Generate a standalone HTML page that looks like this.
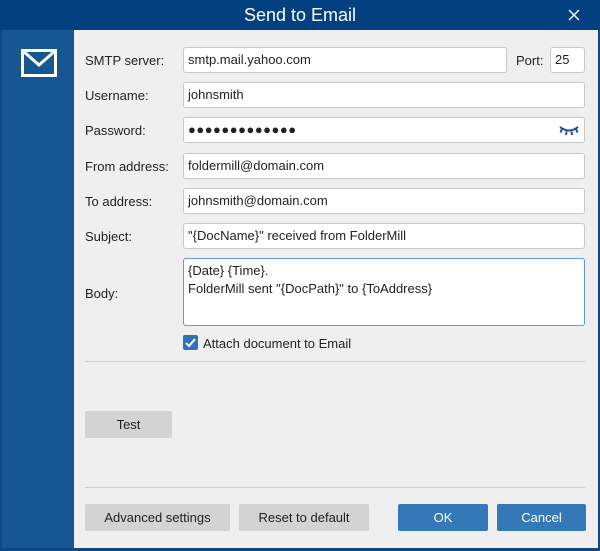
<!DOCTYPE html>
<html><head><style>
*{box-sizing:border-box;margin:0;padding:0}
body{width:600px;height:551px;background:#0e4784;font-family:"Liberation Sans",sans-serif;font-size:13px;color:#222;position:relative;overflow:hidden}
.title{position:absolute;left:0;top:0;width:600px;height:30px;background:#02407f;color:#fff;text-align:center;font-size:18px;line-height:30px}
.side{position:absolute;left:2px;top:30px;width:72px;height:518px;background:#175791}
.main{position:absolute;left:74px;top:30px;width:524px;height:518px;background:#efefef}
.lbl{position:absolute;left:85px}
.in{position:absolute;left:183px;width:402px;height:26px;background:#fff;border:1px solid #c9c9c9;border-radius:3px;padding:0 4px;line-height:24px;white-space:nowrap}
.btn{position:absolute;height:27px;background:#d3d3d3;border-radius:2px;text-align:center;line-height:27px}
.blue{background:#3478b8;color:#fff}
.sep{position:absolute;left:85px;width:500px;height:1px;background:#cfcfcf}
</style></head><body>
<div class="title">Send to Email</div>
<svg style="position:absolute;left:568px;top:9px" width="12" height="12"><path d="M1 1 L11 11 M11 1 L1 11" stroke="#fff" stroke-width="1.4"/></svg>
<div class="side"><svg style="position:absolute;left:19px;top:19px" width="36" height="28" viewBox="0 0 36 28"><rect x="1.5" y="1.5" width="33" height="25" fill="none" stroke="#fff" stroke-width="3"/><path d="M2 2 L18 16 L34 2" fill="none" stroke="#fff" stroke-width="3"/></svg></div>
<div class="main"></div>
<div class="lbl" style="top:53px">SMTP server:</div>
<div class="in" style="top:47px;width:324px">smtp.mail.yahoo.com</div>
<div class="lbl" style="left:516px;top:53px">Port:</div>
<div class="in" style="top:47px;left:550px;width:35px">25</div>
<div class="lbl" style="top:88px">Username:</div>
<div class="in" style="top:82px">johnsmith</div>
<div class="lbl" style="top:123px">Password:</div>
<div class="in" style="top:117px;font-size:13px;letter-spacing:0.5px">●●●●●●●●●●●●●<svg style="position:absolute;right:5px;top:7px" width="20" height="11" viewBox="0 0 20 11"><path d="M1 2 Q10 9 19 2 M3 4 L1.5 7.5 M7.5 6.5 L7 10 M12.5 6.5 L13 10 M17 4 L18.5 7.5" stroke="#1c4f96" stroke-width="2" fill="none"/></svg></div>
<div class="lbl" style="top:159px">From address:</div>
<div class="in" style="top:153px">foldermill@domain.com</div>
<div class="lbl" style="top:194px">To address:</div>
<div class="in" style="top:188px">johnsmith@domain.com</div>
<div class="lbl" style="top:229px">Subject:</div>
<div class="in" style="top:223px">"{DocName}" received from FolderMill</div>
<div class="lbl" style="top:286px">Body:</div>
<div class="in" style="top:258px;height:68px;border-color:#5b9ad6;line-height:18px;padding-top:3px">{Date} {Time}.<br>FolderMill sent "{DocPath}" to {ToAddress}</div>
<div style="position:absolute;left:183px;top:335px;width:15px;height:15px;background:#2f72b5;border-radius:2px"><svg width="15" height="15"><path d="M3 8 L6 11 L12 4" stroke="#fff" stroke-width="2" fill="none"/></svg></div>
<div class="lbl" style="left:203px;top:336px">Attach document to Email</div>
<div class="sep" style="top:361px"></div>
<div class="btn" style="left:85px;top:411px;width:87px">Test</div>
<div class="sep" style="top:487px"></div>
<div class="btn" style="left:85px;top:504px;width:145px">Advanced settings</div>
<div class="btn" style="left:239px;top:504px;width:130px">Reset to default</div>
<div class="btn blue" style="left:398px;top:504px;width:90px">OK</div>
<div class="btn blue" style="left:497px;top:504px;width:89px">Cancel</div>
</body></html>
